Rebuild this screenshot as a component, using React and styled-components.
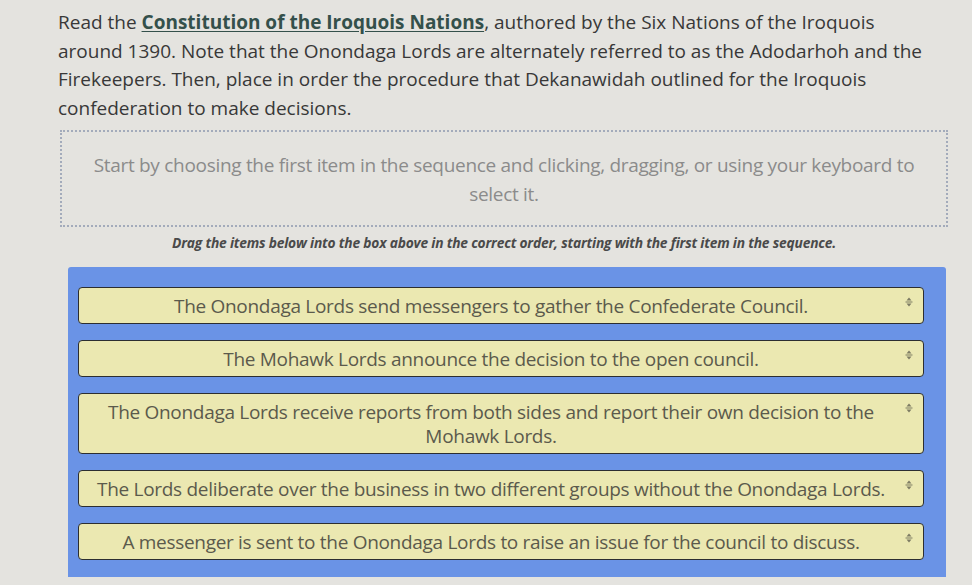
import React from 'react';
import styled, { createGlobalStyle } from 'styled-components';

const GlobalStyle = createGlobalStyle`
  body {
    margin: 0;
    background: #e4e3df;
    font-family: "Open Sans", "Noto Sans", sans-serif;
  }
`

const Page = styled.div`
  width: 972px;
  height: 585px;
  overflow: hidden;
  padding: 8px 0 0 58px;
  box-sizing: border-box;
`

const Prompt = styled.p`
  margin: 0;
  font-size: 19px;
  line-height: 28.5px;
  color: #383838;
`

const SourceLink = styled.a`
  font-weight: 700;
  color: #34504b;
  text-decoration: underline;
  text-underline-offset: 2px;
`

const DropZone = styled.div`
  margin: 8px 0 0 2px;
  width: 888px;
  height: 97px;
  box-sizing: border-box;
  border: 2px dotted #a3abbb;
  padding: 19px 26px 0;
  text-align: center;
  font-size: 19px;
  line-height: 29px;
  color: #8b8b8b;
  letter-spacing: -0.3px;
`

const Hint = styled.p`
  margin: 6px 0 0 2px;
  width: 888px;
  text-align: center;
  font-size: 13.8px;
  font-weight: 700;
  font-style: italic;
  color: #4a4a4a;
  letter-spacing: -0.2px;
`

const Panel = styled.div`
  margin: 15px 0 0 10px;
  width: 878px;
  height: 310px;
  box-sizing: border-box;
  background: #6a93e6;
  border-radius: 3px 3px 0 0;
  padding: 20px 22px 15px 10px;
  display: flex;
  flex-direction: column;
  gap: 16px;
`

const Item = styled.div`
  position: relative;
  background: #ebe8b1;
  border: 1.5px solid #2c2e31;
  border-radius: 4px;
  padding: 5.5px 32px 5.5px 12px;
  text-align: center;
  font-size: 19px;
  line-height: 24px;
  color: #5b5a4c;
  letter-spacing: -0.3px;
`

const Handle = styled.svg`
  position: absolute;
  top: 9px;
  right: 10px;
  width: 8px;
  height: 10px;
`

const steps = [
  'The Onondaga Lords send messengers to gather the Confederate Council.',
  'The Mohawk Lords announce the decision to the open council.',
  'The Onondaga Lords receive reports from both sides and report their own decision to the Mohawk Lords.',
  'The Lords deliberate over the business in two different groups without the Onondaga Lords.',
  'A messenger is sent to the Onondaga Lords to raise an issue for the council to discuss.',
];

function DragHandle() {
  return (
    <Handle viewBox="0 0 8 10">
      <path d="M4 0.5 L6.5 3.5 H1.5 Z" fill="#7d7b63" />
      <rect x="0.5" y="4.5" width="7" height="1" fill="#7d7b63" />
      <path d="M4 9.5 L6.5 6.5 H1.5 Z" fill="#7d7b63" />
    </Handle>
  );
}

export default function App() {
  return (
    <Page>
      <GlobalStyle />
      <Prompt>
        Read the <SourceLink>Constitution of the Iroquois Nations</SourceLink>, authored by the Six Nations of the Iroquois<br />
        around 1390. Note that the Onondaga Lords are alternately referred to as the Adodarhoh and the<br />
        Firekeepers. Then, place in order the procedure that Dekanawidah outlined for the Iroquois<br />
        confederation to make decisions.
      </Prompt>
      <DropZone>
        Start by choosing the first item in the sequence and clicking, dragging, or using your keyboard to select it.
      </DropZone>
      <Hint>Drag the items below into the box above in the correct order, starting with the first item in the sequence.</Hint>
      <Panel>
        {steps.map((step) => (
          <Item key={step}>
            {step}
            <DragHandle />
          </Item>
        ))}
      </Panel>
    </Page>
  );
}
